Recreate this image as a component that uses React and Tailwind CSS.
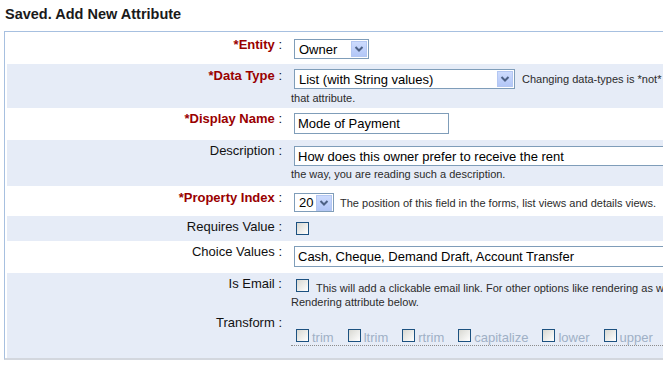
import React from "react";

const Chevron = () => (
  <div className="w-[16px] h-[16px] flex items-center justify-center border border-[#b4c7f2] bg-linear-to-b from-[#cddbfd] to-[#b3c7f7]">
    <svg width="10" height="8" viewBox="0 0 10 8">
      <path d="M1.5 2 L5 5.5 L8.5 2" stroke="#4d6185" strokeWidth="2" fill="none" />
    </svg>
  </div>
);

const Select = ({ w, h = "h-[20px]", children }) => (
  <div className={`${w} ${h} ml-[3px] shrink-0 flex items-center justify-between border border-[#7f9db9] bg-white pl-[4px] pr-px text-[13px] leading-[15px] text-black`}>
    <span className="whitespace-nowrap">{children}</span>
    <Chevron />
  </div>
);

const Input = ({ w, h = "h-[21px]", children }) => (
  <div className={`${w} ${h} ml-[3px] shrink-0 flex items-center border border-[#7f9db9] bg-white pl-[3px] text-[13px] leading-[15px] text-black whitespace-nowrap overflow-hidden`}>
    {children}
  </div>
);

const Check = ({ className = "" }) => (
  <div className={`w-[13px] h-[13px] shrink-0 border border-[#1c5180] bg-linear-to-br from-[#d8d8d2] to-white ${className}`} />
);

const Req = ({ children }) => (
  <>
    <span className="font-bold text-[#990000]">*{children}</span> :
  </>
);

const Row = ({ bg, h, lpt, vpt, label, children }) => (
  <div className={`flex items-start ${h} ${bg ? "bg-[#e6ecf7]" : "bg-white"}`}>
    <div className={`w-[278px] shrink-0 text-right pr-[3px] text-[13px] leading-[15px] text-[#111] whitespace-nowrap ${lpt}`}>
      {label}
    </div>
    <div className={`pl-[6px] ${vpt}`}>{children}</div>
  </div>
);

const Help = ({ className = "", children }) => (
  <div className={`text-[11px] leading-[14px] text-[#2b2b2b] whitespace-nowrap ${className}`}>{children}</div>
);

const TItem = ({ label }) => (
  <div className="flex items-baseline mr-[14px]">
    <Check className="mr-[3px]" />
    <span className="text-[13px] leading-[15px] text-[#9fb0c6]">{label}</span>
  </div>
);

export default function App() {
  return (
    <div className="w-[663px] h-[365px] overflow-hidden bg-white font-['Liberation_Sans',Arial,sans-serif] text-black">
      <div className="h-[31px] pl-[5px] pt-[6px] text-[14.5px] leading-[17px] font-bold text-[#1a1a1a]">
        Saved. Add New Attribute
      </div>
      <div className="ml-[4px] w-[1000px] border-l border-t border-[#a7c0e0] border-b-2 border-b-[#d3d7de] pl-[2px]">
        <Row h="h-[32px]" lpt="pt-[5px]" vpt="pt-[7px]" label={<Req>Entity</Req>}>
          <Select w="w-[75px]">Owner</Select>
        </Row>
        <Row bg h="h-[44px]" lpt="pt-[4px]" vpt="pt-[5px]" label={<Req>Data Type</Req>}>
          <div className="flex items-center">
            <Select w="w-[221px]">List (with String values)</Select>
            <Help className="ml-[7px]">
              Changing data-types is *not* recommended once data has been captured for
            </Help>
          </div>
          <Help className="mt-[2px]">that attribute.</Help>
        </Row>
        <Row h="h-[32px]" lpt="pt-[3px]" vpt="pt-[5px]" label={<Req>Display Name</Req>}>
          <Input w="w-[155px]">Mode of Payment</Input>
        </Row>
        <Row bg h="h-[46px]" lpt="pt-[3px]" vpt="pt-[6px]" label="Description :">
          <Input w="w-[560px]" h="h-[20px]">How does this owner prefer to receive the rent</Input>
          <Help className="mt-px">the way, you are reading such a description.</Help>
        </Row>
        <Row h="h-[30px]" lpt="pt-[4px]" vpt="pt-[7px]" label={<Req>Property Index</Req>}>
          <div className="flex items-center">
            <Select w="w-[40px]" h="h-[19px]">20</Select>
            <Help className="ml-[6px]">
              The position of this field in the forms, list views and details views.
            </Help>
          </div>
        </Row>
        <Row bg h="h-[25px]" lpt="pt-[3px]" vpt="pt-[6px]" label="Requires Value :">
          <Check className="ml-[5px]" />
        </Row>
        <Row h="h-[32px]" lpt="pt-[3px]" vpt="pt-[5px]" label="Choice Values :">
          <Input w="w-[560px]">Cash, Cheque, Demand Draft, Account Transfer</Input>
        </Row>
        <div className="bg-[#e6ecf7] h-[85px]">
          <div className="flex items-start h-[36px]">
            <div className="w-[278px] shrink-0 text-right pr-[3px] text-[13px] leading-[15px] text-[#111] pt-[3px]">
              Is Email :
            </div>
            <div className="pl-[6px] pt-[6px]">
              <div className="flex items-start">
                <Check className="ml-[5px]" />
                <Help className="ml-[7px] mt-[2px]">
                  This will add a clickable email link. For other options like rendering as web links use the
                </Help>
              </div>
              <Help>Rendering attribute below.</Help>
            </div>
          </div>
          <div className="flex items-start">
            <div className="w-[278px] shrink-0 text-right pr-[3px] text-[13px] leading-[15px] text-[#111] pt-[6px]">
              Transform :
            </div>
            <div className="pl-[6px] pt-[20px]">
              <div className="w-[640px] flex items-baseline pl-[5px] border-b border-dotted border-[#8c8c8c]">
                <TItem label="trim" />
                <TItem label="ltrim" />
                <TItem label="rtrim" />
                <TItem label="capitalize" />
                <TItem label="lower" />
                <TItem label="upper" />
              </div>
            </div>
          </div>
        </div>
      </div>
    </div>
  );
}
